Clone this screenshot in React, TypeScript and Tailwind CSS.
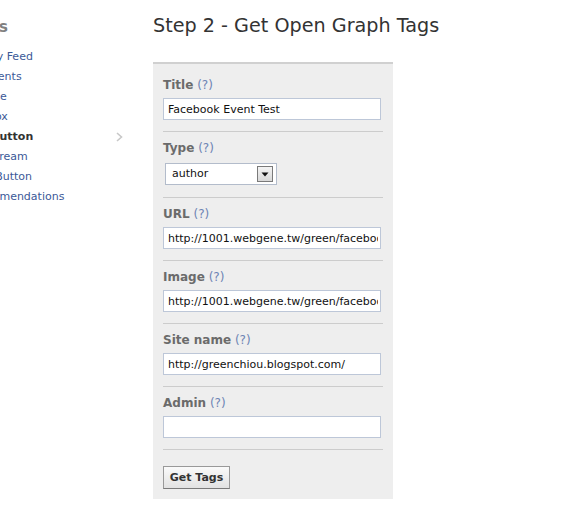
import React from "react";

const font = { fontFamily: '"DejaVu Sans", Verdana, sans-serif' };

function Label({ text }: { text: string }) {
  return (
    <div className="h-[16px] leading-[16px] text-[12px] whitespace-nowrap">
      <span className="font-bold text-[#6b6b6b]">{text}</span>{" "}
      <span className="text-[#6d84b4]">(?)</span>
    </div>
  );
}

function TextField({ value }: { value: string }) {
  return (
    <input
      readOnly
      value={value}
      className="block w-[218px] h-[22px] border border-[#bdc7d8] bg-white pl-[4px] pr-[2px] text-[11px] text-[#111] outline-none"
      style={font}
    />
  );
}

function Section({
  label,
  children,
  first,
  gap = "mt-[5px]",
  pb = "pb-[11px]",
}: {
  label: string;
  children: React.ReactNode;
  first?: boolean;
  gap?: string;
  pb?: string;
}) {
  return (
    <div className={`${first ? "pt-[13px]" : "pt-[8px]"} ${pb} border-b border-[#cccccc] mr-[10px]`}>
      <Label text={label} />
      <div className={gap}>{children}</div>
    </div>
  );
}

export default function App() {
  const items = [
    { t: "Activity Feed" },
    { t: "Comments" },
    { t: "Facepile" },
    { t: "Like Box" },
    { t: "Like Button", sel: true },
    { t: "Live Stream" },
    { t: "Login Button" },
    { t: "Recommendations" },
  ];
  return (
    <div className="w-[561px] h-[513px] bg-white overflow-hidden flex" style={font}>
      {/* sidebar */}
      <div className="w-[191px] ml-[-38px] shrink-0">
        <div className="mt-[17px] ml-[-72px] h-[20px] leading-[20px] text-[15px] font-bold text-[#808080] whitespace-nowrap">
          Social Plugins
        </div>
        <div className="mt-[10px] w-[161px]">
          {items.map((it) => (
            <div
              key={it.t}
              className={`h-[20px] leading-[20px] text-[11px] whitespace-nowrap flex items-center justify-between ${
                it.sel ? "font-bold text-[#333333]" : "text-[#3b5998]"
              }`}
            >
              <span>{it.t}</span>
              {it.sel && (
                <svg width="7" height="10" viewBox="0 0 7 10">
                  <path d="M1 1 L5.5 5 L1 9" fill="none" stroke="#c8c8c8" strokeWidth="1.6" />
                </svg>
              )}
            </div>
          ))}
        </div>
      </div>

      {/* main */}
      <div className="flex-1">
        <h1 className="mt-[14px] h-[24px] leading-[24px] text-[19.2px] text-[#333333] font-normal whitespace-nowrap">
          Step 2 - Get Open Graph Tags
        </h1>
        <div className="mt-[24px] w-[240px] bg-[#eeeeee] border-t-2 border-[#d0d0d0] pl-[10px] pb-[10px]">
          <Section label="Title" first>
            <TextField value="Facebook Event Test" />
          </Section>
          <Section label="Type" gap="mt-[7px]" pb="pb-[12px]">
            <div className="ml-[2px] w-[112px] h-[22px] border border-[#b3bccb] bg-white flex items-center justify-between pl-[6px] pr-[3px]">
              <span className="text-[11px] text-[#111]">author</span>
              <div className="w-[16px] h-[16px] border border-[#7a7a7a] bg-gradient-to-b from-[#f4f4f4] to-[#d8d8d8] flex items-center justify-center">
                <svg width="8" height="5" viewBox="0 0 8 5">
                  <path d="M0.5 0.5 L7.5 0.5 L4 4.5 Z" fill="#111" />
                </svg>
              </div>
            </div>
          </Section>
          <Section label="URL">
            <TextField value="http://1001.webgene.tw/green/facebook/event.html" />
          </Section>
          <Section label="Image">
            <TextField value="http://1001.webgene.tw/green/facebook/image.jpg" />
          </Section>
          <Section label="Site name">
            <TextField value="http://greenchiou.blogspot.com/" />
          </Section>
          <Section label="Admin">
            <TextField value="" />
          </Section>
          <div className="pt-[14px]">
            <button
              className="w-[67px] h-[23px] border border-[#999999] border-b-[#7a7a7a] bg-gradient-to-b from-[#fafafa] to-[#e2e2e2] text-[11px] font-bold text-[#333333] leading-[21px]"
              style={font}
            >
              Get Tags
            </button>
          </div>
        </div>
      </div>
    </div>
  );
}
